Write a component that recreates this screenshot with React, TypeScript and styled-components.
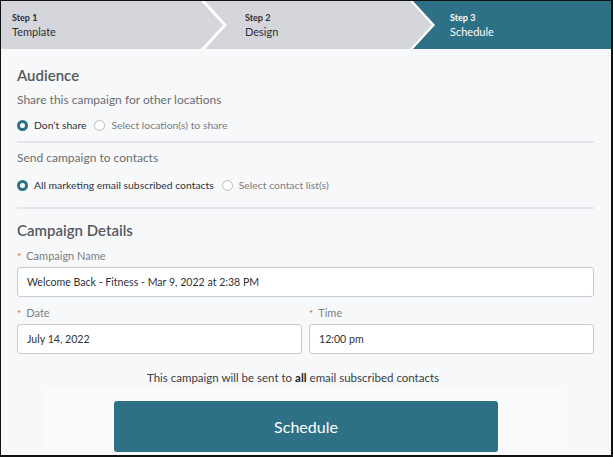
import styled, { createGlobalStyle } from 'styled-components'

const teal = '#2e7086'

const GlobalStyle = createGlobalStyle`
  html, body {
    margin: 0;
    padding: 0;
    background: #000;
  }
  * {
    box-sizing: border-box;
  }
`

interface StepProps {
  $active?: boolean
}

export default function App () {
  return (
    <>
      <GlobalStyle />
      <Frame>
        <Steps>
          <FirstStep>
            <StepNumber>Step 1</StepNumber>
            <StepName>Template</StepName>
          </FirstStep>
          <MiddleStep>
            <StepNumber>Step 2</StepNumber>
            <StepName>Design</StepName>
          </MiddleStep>
          <LastStep $active>
            <StepNumber $active>Step 3</StepNumber>
            <StepName $active>Schedule</StepName>
          </LastStep>
        </Steps>

        <Content>
          <Heading>Audience</Heading>
          <Question>Share this campaign for other locations</Question>
          <RadioRow>
            <RadioOption>
              <Radio $checked />
              <RadioLabel $checked>Don’t share</RadioLabel>
            </RadioOption>
            <RadioOption>
              <Radio />
              <RadioLabel>Select location(s) to share</RadioLabel>
            </RadioOption>
          </RadioRow>
          <Divider />

          <Question $gap={7}>Send campaign to contacts</Question>
          <RadioRow $gap={11}>
            <RadioOption>
              <Radio $checked />
              <RadioLabel $checked>All marketing email subscribed contacts</RadioLabel>
            </RadioOption>
            <RadioOption>
              <Radio />
              <RadioLabel>Select contact list(s)</RadioLabel>
            </RadioOption>
          </RadioRow>
          <Divider $gap={14} />

          <Heading $gap={11}>Campaign Details</Heading>
          <Field>
            <Label><Required>*</Required>Campaign Name</Label>
            <Input>Welcome Back - Fitness - Mar 9, 2022 at 2:38 PM</Input>
          </Field>
          <FieldRow>
            <Field>
              <Label><Required>*</Required>Date</Label>
              <Input>July 14, 2022</Input>
            </Field>
            <Field>
              <Label><Required>*</Required>Time</Label>
              <Input>12:00 pm</Input>
            </Field>
          </FieldRow>
        </Content>

        <Footer>
          <Note>This campaign will be sent to <b>all</b> email subscribed contacts</Note>
          <FooterPanel>
            <ScheduleButton>Schedule</ScheduleButton>
          </FooterPanel>
        </Footer>
      </Frame>
    </>
  )
}

const Frame = styled.div`
  width: 613px;
  height: 457px;
  border-style: solid;
  border-color: #111;
  border-width: 1px 2px 2px 1px;
  background: #f7f8fa;
  font-family: Lato, "Noto Sans", sans-serif;
  overflow: hidden;
  display: flex;
  flex-direction: column;
`

const Steps = styled.div`
  display: flex;
  height: 48px;
  background: #ffffff;
`

const StepBase = styled.div<StepProps>`
  height: 48px;
  display: flex;
  flex-direction: column;
  justify-content: center;
  gap: 2px;
  background: ${p => p.$active ? teal : '#d4d6db'};
`

const FirstStep = styled(StepBase)`
  width: 222px;
  padding-left: 11px;
  clip-path: polygon(0 0, 200px 0, 222px 50%, 200px 100%, 0 100%);
`

const MiddleStep = styled(StepBase)`
  width: 227px;
  margin-left: -18px;
  padding-left: 40px;
  clip-path: polygon(0 0, 205px 0, 227px 50%, 205px 100%, 0 100%, 22px 50%);
`

const LastStep = styled(StepBase)`
  flex: 1;
  margin-left: -19px;
  padding-left: 37px;
  clip-path: polygon(0 0, 100% 0, 100% 100%, 0 100%, 22px 50%);
`

const StepNumber = styled.div<StepProps>`
  font-size: 9px;
  font-weight: 700;
  color: ${p => p.$active ? '#ffffff' : '#2d2f33'};
`

const StepName = styled.div<StepProps>`
  font-size: 11px;
  color: ${p => p.$active ? '#ffffff' : '#2d2f33'};
`

const Content = styled.div`
  padding: 0 17px 0 16px;
  display: flex;
  flex-direction: column;
`

const Heading = styled.h2<{ $gap?: number }>`
  margin: ${p => p.$gap ?? 16}px 0 0;
  font-size: 15px;
  line-height: 20px;
  font-weight: 600;
  color: #55585d;
`

const Question = styled.p<{ $gap?: number }>`
  margin: ${p => p.$gap ?? 7}px 0 0;
  font-size: 12px;
  line-height: 16px;
  color: #6a6d72;
`

const RadioRow = styled.div<{ $gap?: number }>`
  margin-top: ${p => p.$gap ?? 9}px;
  display: flex;
  align-items: center;
  gap: 8px;
  height: 16px;
`

const RadioOption = styled.label`
  display: flex;
  align-items: center;
  gap: 6px;
`

const Radio = styled.span<{ $checked?: boolean }>`
  width: 11px;
  height: 11px;
  border-radius: 50%;
  background: #ffffff;
  border: ${p => p.$checked ? `3px solid ${teal}` : '1px solid #b9bcc1'};
`

const RadioLabel = styled.span<{ $checked?: boolean }>`
  font-size: 10.4px;
  color: ${p => p.$checked ? '#2f3236' : '#7a7d82'};
`

const Divider = styled.hr<{ $gap?: number }>`
  margin: ${p => p.$gap ?? 8}px 0 0;
  border: none;
  height: 2px;
  background: #e4e6e9;
`

const Field = styled.div`
  flex: 1;
  display: flex;
  flex-direction: column;
  gap: 4px;
  margin-top: 9px;
`

const FieldRow = styled.div`
  display: flex;
  gap: 7px;
`

const Label = styled.div`
  font-size: 11px;
  line-height: 14px;
  color: #7c7f84;
`

const Required = styled.span`
  color: #e0612f;
  margin-right: 5px;
  font-size: 10px;
`

const Input = styled.div`
  height: 30px;
  display: flex;
  align-items: center;
  padding: 0 9px;
  background: #ffffff;
  border: 1px solid #c8cbd0;
  border-radius: 3px;
  font-size: 10.6px;
  color: #2f3236;
`

const Footer = styled.div`
  display: flex;
  flex-direction: column;
  align-items: center;
  margin-top: 17px;
`

const Note = styled.p`
  margin: 0 26px 0 0;
  font-size: 11.5px;
  line-height: 14px;
  color: #3a3d41;

  b {
    font-weight: 700;
    color: #1f2124;
  }
`

const FooterPanel = styled.div`
  align-self: stretch;
  margin: 2px 44px 0;
  padding-top: 14px;
  display: flex;
  justify-content: center;
  background: #f9fafb;
`

const ScheduleButton = styled.button`
  width: 384px;
  height: 51px;
  border: none;
  border-radius: 3px;
  background: ${teal};
  color: #ffffff;
  font-family: Lato, "Noto Sans", sans-serif;
  font-size: 16px;
  cursor: pointer;
`
